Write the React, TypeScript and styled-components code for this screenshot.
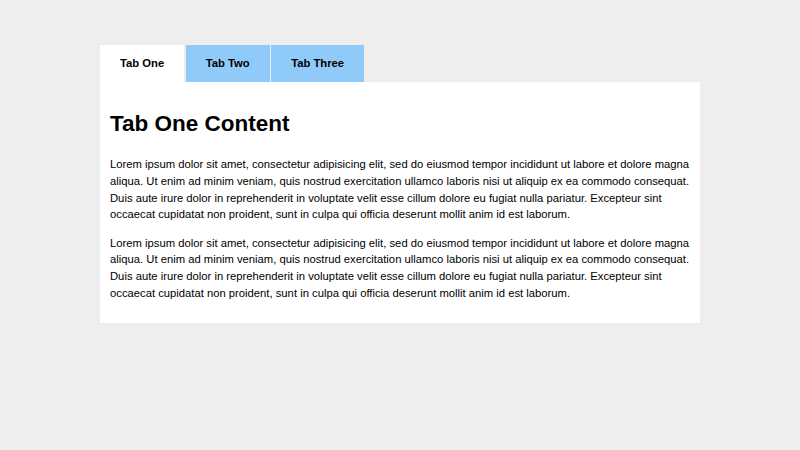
import React, { useState } from "react";
import styled, { createGlobalStyle } from "styled-components";

const GlobalStyle = createGlobalStyle`
  html, body {
    margin: 0;
    padding: 0;
    background: #eeeeee;
    font-family: "Liberation Sans", Arial, sans-serif;
    font-size: 11.25px;
    line-height: 1.5;
    color: #000;
  }
`;

const Page = styled.div`
  width: 600px;
  margin: 0 auto;
  padding-top: 45px;
`;

const TabBar = styled.div`
  display: flex;
  gap: 1.5px;
`;

const TabButton = styled.button<{ $active: boolean }>`
  border: none;
  margin: 0;
  padding: 10px 20px;
  font-family: inherit;
  font-size: 11.25px;
  line-height: 1.5;
  font-weight: bold;
  color: #000;
  cursor: pointer;
  background: ${(p) => (p.$active ? "#ffffff" : "#90caf9")};
`;

const Panel = styled.div`
  background: #ffffff;
  padding: 10px;
`;

const Title = styled.h1`
  margin: 0.67em 0;
  font-size: 2em;
  font-weight: bold;
`;

const Paragraph = styled.p`
  margin: 1em 0;
`;

const LOREM =
  "Lorem ipsum dolor sit amet, consectetur adipisicing elit, sed do eiusmod tempor incididunt ut labore et dolore magna aliqua. Ut enim ad minim veniam, quis nostrud exercitation ullamco laboris nisi ut aliquip ex ea commodo consequat. Duis aute irure dolor in reprehenderit in voluptate velit esse cillum dolore eu fugiat nulla pariatur. Excepteur sint occaecat cupidatat non proident, sunt in culpa qui officia deserunt mollit anim id est laborum.";

const tabs = ["Tab One", "Tab Two", "Tab Three"];

export default function App() {
  const [active, setActive] = useState(0);
  return (
    <>
      <GlobalStyle />
      <Page>
        <TabBar>
          {tabs.map((t, i) => (
            <TabButton key={t} $active={i === active} onClick={() => setActive(i)}>
              {t}
            </TabButton>
          ))}
        </TabBar>
        <Panel>
          <Title>{tabs[active]} Content</Title>
          <Paragraph>{LOREM}</Paragraph>
          <Paragraph>{LOREM}</Paragraph>
        </Panel>
      </Page>
    </>
  );
}
